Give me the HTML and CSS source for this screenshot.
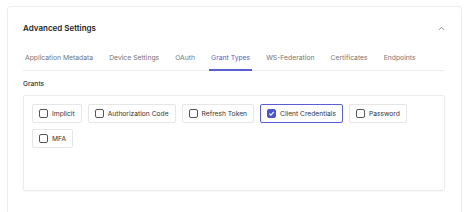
FILE: index.html
```html
<!DOCTYPE html>
<html lang="en">
<head>
  <meta charset="UTF-8">
  <title>Advanced Settings</title>
  <link rel="stylesheet" href="styles.css">
</head>
<body>
  <div class="card">
    <div class="card-header">
      <div class="card-title">Advanced Settings</div>
      <svg class="chevron" width="7" height="5" viewBox="0 0 7 5">
        <path d="M1 3.8 L3.5 1.3 L6 3.8" fill="none" stroke="#8a8a8a" stroke-width="1"/>
      </svg>
    </div>

    <div class="tabs">
      <div class="tab">Application Metadata</div>
      <div class="tab">Device Settings</div>
      <div class="tab">OAuth</div>
      <div class="tab active">Grant Types</div>
      <div class="tab">WS-Federation</div>
      <div class="tab">Certificates</div>
      <div class="tab">Endpoints</div>
    </div>

    <div class="section-label">Grants</div>

    <div class="grants">
      <label class="grant"><span class="box"></span>Implicit</label>
      <label class="grant"><span class="box"></span>Authorization Code</label>
      <label class="grant"><span class="box"></span>Refresh Token</label>
      <label class="grant checked">
        <span class="box">
          <svg width="7" height="7" viewBox="0 0 7 7"><path d="M1.3 3.6 L2.9 5.1 L5.8 1.9" fill="none" stroke="#fff" stroke-width="1.1"/></svg>
        </span>Client Credentials</label>
      <label class="grant"><span class="box"></span>Password</label>
      <label class="grant"><span class="box"></span>MFA</label>
    </div>
  </div>
</body>
</html>
```

FILE: styles.css
```css
body {
  margin: 0;
  padding: 6px 12px 0 7px;
  background: #fff;
  font-family: Inter, "Noto Sans", sans-serif;
  color: #222;
}

.card {
  box-sizing: border-box;
  height: 206px;
  border: 1px solid #ededed;
  border-bottom: none;
  border-radius: 4px 4px 0 0;
  padding: 14px 16px 0 15px;
}

.card-header {
  display: flex;
  align-items: center;
  justify-content: space-between;
  height: 14px;
}

.card-title {
  font-size: 8px;
  font-weight: 600;
  color: #1e1e1e;
}

.tabs {
  display: flex;
  gap: 12px;
  margin-top: 14px;
  border-bottom: 1px solid #ececec;
  white-space: nowrap;
}

.tab {
  flex: none;
  font-size: 6.8px;
  line-height: 11px;
  padding: 3px 2px 6px;
  color: #757575;
  margin-bottom: -1px;
  border-bottom: 2px solid transparent;
}

.tab.active {
  color: #5a5ed4;
  border-bottom-color: #5a5ed4;
}

.section-label {
  margin-top: 8px;
  font-size: 6.7px;
  line-height: 10px;
  font-weight: 500;
  color: #333;
}

.grants {
  margin-top: 6px;
  border: 1px solid #ececec;
  border-radius: 2px;
  box-shadow: 0 1px 2px rgba(0, 0, 0, 0.04);
  padding: 8px;
  height: 78px;
  display: flex;
  flex-wrap: wrap;
  align-content: flex-start;
  gap: 6px;
}

.grant {
  display: flex;
  align-items: center;
  gap: 4px;
  height: 19px;
  box-sizing: border-box;
  padding: 0 6px;
  border: 1px solid #e6e6e6;
  border-radius: 2px;
  font-size: 6.7px;
  color: #333;
  white-space: nowrap;
}

.box {
  width: 9px;
  height: 9px;
  box-sizing: border-box;
  border: 1px solid #555;
  border-radius: 2px;
  display: flex;
  align-items: center;
  justify-content: center;
}

.grant.checked {
  border: 1.5px solid #5a5ed4;
}

.grant.checked .box {
  background: #4e53cf;
  border-color: #4e53cf;
}
```
